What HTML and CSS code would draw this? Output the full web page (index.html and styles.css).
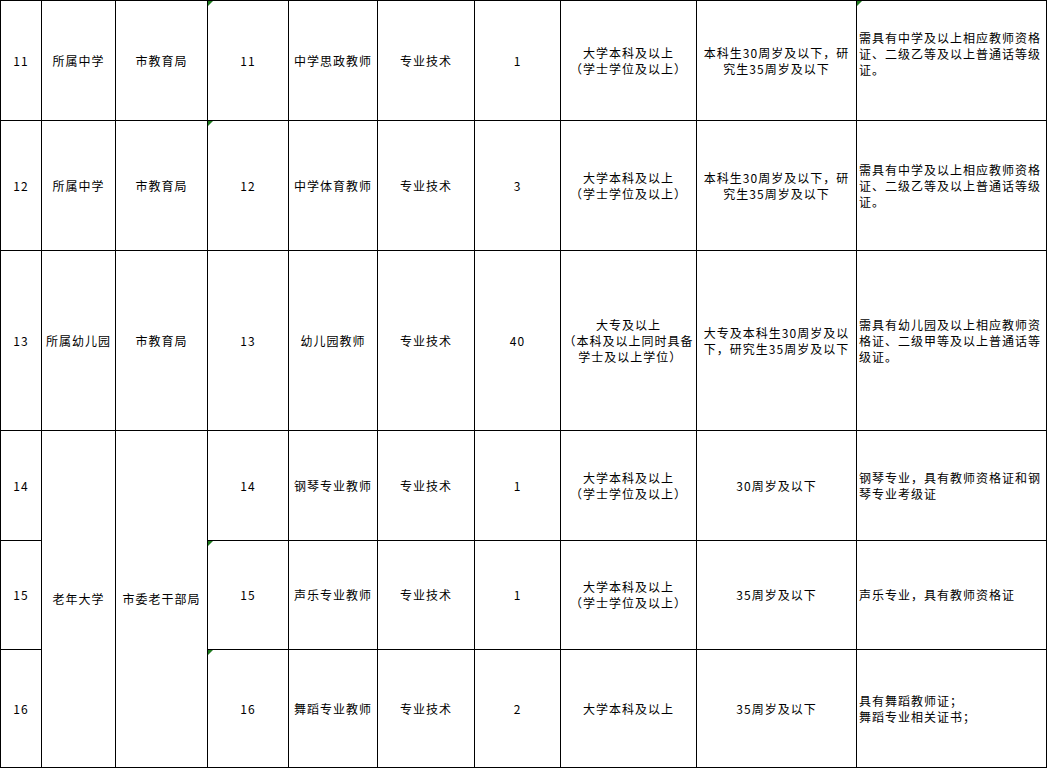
FILE: index.html
```html
<!DOCTYPE html>
<html lang="zh-CN">
<head>
<meta charset="utf-8">
<title>招聘岗位表</title>
<link rel="stylesheet" href="styles.css">
</head>
<body>
<div class="sheet">
  <div class="c">11</div>
  <div class="c">所属中学</div>
  <div class="c">市教育局</div>
  <div class="c mark">11</div>
  <div class="c">中学思政教师</div>
  <div class="c">专业技术</div>
  <div class="c">1</div>
  <div class="c">大学本科及以上<br>（学士学位及以上）</div>
  <div class="c">本科生30周岁及以下，研<br>究生35周岁及以下</div>
  <div class="c note mark up">需具有中学及以上相应教师资格证、二级乙等及以上普通话等级证。</div>

  <div class="c">12</div>
  <div class="c">所属中学</div>
  <div class="c">市教育局</div>
  <div class="c mark">12</div>
  <div class="c">中学体育教师</div>
  <div class="c">专业技术</div>
  <div class="c">3</div>
  <div class="c">大学本科及以上<br>（学士学位及以上）</div>
  <div class="c">本科生30周岁及以下，研<br>究生35周岁及以下</div>
  <div class="c note">需具有中学及以上相应教师资格证、二级乙等及以上普通话等级证。</div>

  <div class="c">13</div>
  <div class="c">所属幼儿园</div>
  <div class="c">市教育局</div>
  <div class="c">13</div>
  <div class="c">幼儿园教师</div>
  <div class="c">专业技术</div>
  <div class="c">40</div>
  <div class="c">大专及以上<br>（本科及以上同时具备<br>&nbsp;学士及以上学位）</div>
  <div class="c">大专及本科生30周岁及以<br>下，研究生35周岁及以下</div>
  <div class="c note">需具有幼儿园及以上相应教师资格证、二级甲等及以上普通话等级证。</div>

  <div class="c">14</div>
  <div class="c span3">老年大学</div>
  <div class="c span3">市委老干部局</div>
  <div class="c">14</div>
  <div class="c">钢琴专业教师</div>
  <div class="c">专业技术</div>
  <div class="c">1</div>
  <div class="c">大学本科及以上<br>（学士学位及以上）</div>
  <div class="c">30周岁及以下</div>
  <div class="c note">钢琴专业，具有教师资格证和钢琴专业考级证</div>

  <div class="c">15</div>
  <div class="c mark">15</div>
  <div class="c">声乐专业教师</div>
  <div class="c">专业技术</div>
  <div class="c">1</div>
  <div class="c">大学本科及以上<br>（学士学位及以上）</div>
  <div class="c">35周岁及以下</div>
  <div class="c note">声乐专业，具有教师资格证</div>

  <div class="c">16</div>
  <div class="c mark">16</div>
  <div class="c">舞蹈专业教师</div>
  <div class="c">专业技术</div>
  <div class="c">2</div>
  <div class="c">大学本科及以上</div>
  <div class="c">35周岁及以下</div>
  <div class="c note">具有舞蹈教师证；<br>舞蹈专业相关证书；</div>
</div>
</body>
</html>
```

FILE: styles.css
```css
html, body {
  margin: 0;
  padding: 0;
  background: #ffffff;
}

body {
  font-family: "Noto Sans CJK SC", "Noto Sans", sans-serif;
  font-size: 12px;
  letter-spacing: 1px;
  line-height: 16px;
  color: #000000;
}

.sheet {
  display: grid;
  grid-template-columns: 40px 73px 91px 80px 88px 96px 85px 135px 159px 189px;
  grid-template-rows: 119px 129px 179px 109px 108px 117px;
  gap: 1px;
  padding: 1px;
  width: 1047px;
  height: 768px;
  box-sizing: border-box;
  background: #000000;
  overflow: hidden;
}

.c {
  background: #ffffff;
  display: flex;
  align-items: center;
  justify-content: center;
  text-align: center;
  position: relative;
  overflow: hidden;
  white-space: normal;
}

.note {
  justify-content: flex-start;
  text-align: left;
  padding-left: 2px;
}

.up {
  padding-bottom: 14px;
}

.span3 {
  grid-row: span 3;
}

.mark::before {
  content: "";
  position: absolute;
  left: 0;
  top: 0;
  width: 0;
  height: 0;
  border-top: 5px solid #1f7a1f;
  border-right: 5px solid transparent;
}
```
